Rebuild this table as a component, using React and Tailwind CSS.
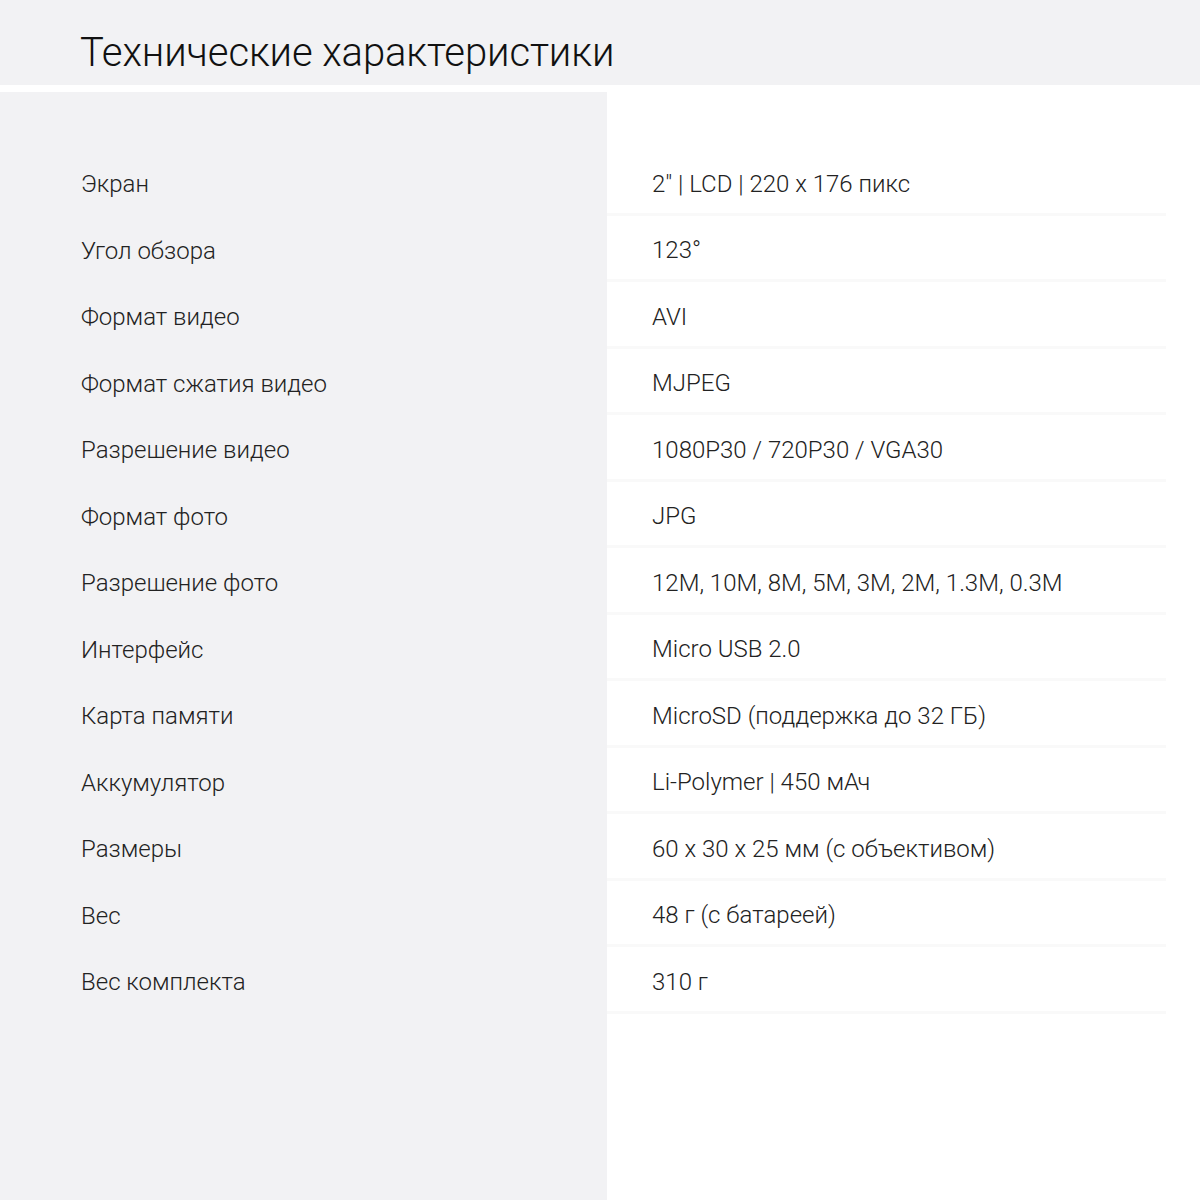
const specs = [
  ["Экран", "2\" | LCD | 220 x 176 пикс"],
  ["Угол обзора", "123°"],
  ["Формат видео", "AVI"],
  ["Формат сжатия видео", "MJPEG"],
  ["Разрешение видео", "1080P30 / 720P30 / VGA30"],
  ["Формат фото", "JPG"],
  ["Разрешение фото", "12M, 10M, 8M, 5M, 3M, 2M, 1.3M, 0.3M"],
  ["Интерфейс", "Micro USB 2.0"],
  ["Карта памяти", "MicroSD (поддержка до 32 ГБ)"],
  ["Аккумулятор", "Li-Polymer | 450 мАч"],
  ["Размеры", "60 x 30 x 25 мм (с объективом)"],
  ["Вес", "48 г (с батареей)"],
  ["Вес комплекта", "310 г"],
];

export default function App() {
  return (
    <div className="w-[1200px] h-[1200px] bg-white font-['Roboto',sans-serif] font-light overflow-hidden flex flex-col">
      <header className="h-[85px] bg-[#f2f2f4] flex items-center pl-[80px] pt-[20px]">
        <h1 className="text-[40px] leading-none tracking-[-0.1px] text-[#111]">Технические характеристики</h1>
      </header>

      <div className="flex flex-1 mt-[7px]">
        <div className="w-[607px] bg-[#f2f2f4] pt-[57px]">
          {specs.map(([label]) => (
            <div key={label} className="h-[66.5px] pl-[81px] pb-[2px] flex items-center">
              <span className="text-[24px] text-[#222] pt-[6px]">{label}</span>
            </div>
          ))}
        </div>
        <div className="flex-1 pt-[57px] pr-[34px]">
          {specs.map(([label, value]) => (
            <div key={label} className="h-[66.5px] pl-[45px] flex items-center border-b-[3px] border-[#f9f9f9]">
              <span className="text-[24px] text-[#222] pt-[6px]">{value}</span>
            </div>
          ))}
        </div>
      </div>
    </div>
  );
}
